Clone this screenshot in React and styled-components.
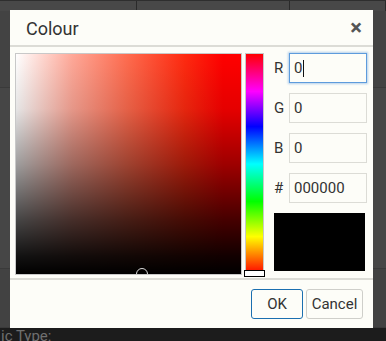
import React, { useState } from 'react';
import styled, { createGlobalStyle } from 'styled-components';

const GlobalStyle = createGlobalStyle`
  html, body {
    margin: 0;
    padding: 0;
    background: #464646;
    font-family: Roboto, "Liberation Sans", Arial, sans-serif;
  }
`;

const Page = styled.div`
  position: relative;
  width: 386px;
  height: 341px;
  overflow: hidden;
  background: #464646;
`;

// what sits behind the modal
const TopStrip = styled.div`
  display: grid;
  grid-template-columns: 137px 153px 1fr;
  height: 10px;
  border-top: 1px solid #2e2e2e;
  & > div {
    border-right: 1px solid #2a2a2a;
    background: #484848;
  }
`;

const Middle = styled.div`
  height: 317px;
  display: flex;
  flex-direction: column;
  & > div {
    border-bottom: 1px solid #3a3a3a;
  }
`;

const Band = styled.div`
  height: ${p => p.h}px;
  background: ${p => p.bg || '#464646'};
`;

const BottomStrip = styled.div`
  height: 13px;
  background: #1c1c1c;
  color: #6f6f6f;
  font-size: 15px;
  line-height: 17px;
  padding-left: 1px;
  white-space: nowrap;
`;

const Dialog = styled.div`
  position: absolute;
  left: 10px;
  top: 10px;
  width: 363px;
  height: 318px;
  background: #fdfdf8;
  display: flex;
  flex-direction: column;
  box-sizing: border-box;
`;

const Header = styled.div`
  height: 35px;
  border-bottom: 2px solid #dcdcd6;
  display: flex;
  align-items: center;
  justify-content: space-between;
  padding: 0 11px 0 16px;
`;

const Title = styled.div`
  font-size: 18px;
  color: #333;
  padding-top: 2px;
`;

const Close = styled.div`
  font-size: 22px;
  font-weight: bold;
  color: #555;
  line-height: 1;
  padding-top: 1px;
`;

const Body = styled.div`
  display: flex;
  padding: 6px 0 0 5px;
  height: 225px;
  border-bottom: 2px solid #dcdcd6;
`;

const SatBox = styled.div`
  position: relative;
  width: 225px;
  height: 220px;
  border: 1px solid #c8c8c8;
  background:
    linear-gradient(to bottom,
      rgba(0,0,0,0) 0%, rgba(0,0,0,0.1) 25%, rgba(0,0,0,0.38) 50%,
      rgba(0,0,0,0.72) 75%, rgba(0,0,0,0.93) 92%, #000 100%),
    linear-gradient(to right,
      #fff 0%, #ffa898 25%, #ff6a4d 50%, #ff2a10 75%, #f00 92%, #f00 100%);
  overflow: hidden;
`;

const SatMarker = styled.div`
  position: absolute;
  left: 120px;
  bottom: -6px;
  width: 10px;
  height: 10px;
  border-radius: 50%;
  border: 1px solid #ddd;
`;

const HueBar = styled.div`
  position: relative;
  margin-left: 3px;
  width: 17px;
  height: 220px;
  border: 1px solid #c8c8c8;
  background: linear-gradient(to bottom,
    #f00 0%, #f0f 17%, #00f 33%, #0ff 50%, #0f0 67%, #ff0 83%, #f00 100%);
`;

const HueMarker = styled.div`
  position: absolute;
  left: -2px;
  right: -2px;
  bottom: -3px;
  height: 5px;
  border: 1px solid #000;
  background: #fff;
`;

const Side = styled.div`
  margin-left: 10px;
  display: flex;
  flex-direction: column;
  gap: 10px;
`;

const Row = styled.div`
  display: flex;
  align-items: center;
`;

const Label = styled.div`
  width: 15px;
  font-size: 15px;
  color: #333;
`;

const Field = styled.div`
  width: 78px;
  height: 30px;
  box-sizing: border-box;
  display: flex;
  align-items: center;
  border: 1px solid ${p => (p.focused ? '#5d9bdc' : '#dcdcd6')};
  box-shadow: ${p => (p.focused ? '0 0 2px 1px rgba(93,155,220,0.45)' : 'none')};
  background: #fdfdf8;
  padding: 0 4px;
  font-size: 15px;
  color: #333;
`;

const Caret = styled.span`
  display: inline-block;
  width: 1px;
  height: 17px;
  margin-left: 1px;
  background: #111;
`;

const Preview = styled.div`
  width: 91px;
  height: 58px;
  background: ${p => p.color};
`;

const Footer = styled.div`
  flex: 1;
  display: flex;
  justify-content: flex-end;
  align-items: center;
  gap: 3px;
  padding-right: 10px;
`;

const Button = styled.button`
  height: 30px;
  width: ${p => (p.primary ? 52 : 57)}px;
  padding: 0;
  border: 1px solid ${p => (p.primary ? '#1b6fb0' : '#cfcfca')};
  border-radius: 3px;
  background: #fdfdf8;
  font-family: Roboto, "Liberation Sans", Arial, sans-serif;
  font-size: 15px;
  color: #333;
`;

export default function App() {
  const [rgb] = useState({ r: '0', g: '0', b: '0' });
  const hex = '000000';

  return (
    <Page>
      <GlobalStyle />
      <TopStrip>
        <div />
        <div />
        <div />
      </TopStrip>
      <Middle>
        <Band h={76} bg="#434343" />
        <Band h={181} />
        <Band h={58} bg="#424242" />
      </Middle>
      <BottomStrip>ic Type:</BottomStrip>

      <Dialog>
        <Header>
          <Title>Colour</Title>
          <Close>×</Close>
        </Header>
        <Body>
          <SatBox>
            <SatMarker />
          </SatBox>
          <HueBar>
            <HueMarker />
          </HueBar>
          <Side>
            <Row>
              <Label>R</Label>
              <Field focused>
                {rgb.r}
                <Caret />
              </Field>
            </Row>
            <Row>
              <Label>G</Label>
              <Field>{rgb.g}</Field>
            </Row>
            <Row>
              <Label>B</Label>
              <Field>{rgb.b}</Field>
            </Row>
            <Row>
              <Label>#</Label>
              <Field>{hex}</Field>
            </Row>
            <Preview color={'#' + hex} />
          </Side>
        </Body>
        <Footer>
          <Button primary>OK</Button>
          <Button>Cancel</Button>
        </Footer>
      </Dialog>
    </Page>
  );
}
